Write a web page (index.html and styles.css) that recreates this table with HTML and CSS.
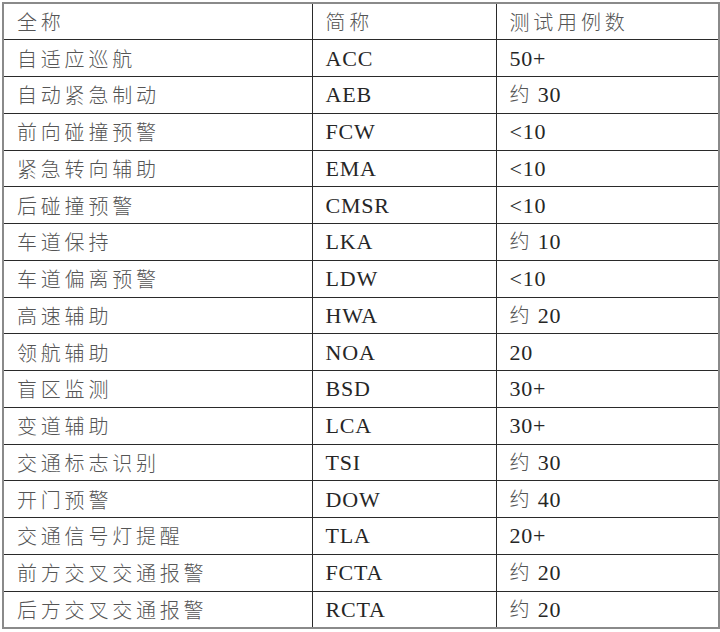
FILE: index.html
```html
<!DOCTYPE html>
<html lang="zh">
<head>
<meta charset="utf-8">
<link rel="stylesheet" href="styles.css">
</head>
<body>
<table class="grid">
<colgroup><col class="c1"><col class="c2"><col class="c3"></colgroup>
<tr><td class="zh">全称</td><td class="zh">简称</td><td class="zh">测试用例数</td></tr>
<tr><td class="zh">自适应巡航</td><td>ACC</td><td>50+</td></tr>
<tr><td class="zh">自动紧急制动</td><td>AEB</td><td><span class="zh">约</span> 30</td></tr>
<tr><td class="zh">前向碰撞预警</td><td>FCW</td><td>&lt;10</td></tr>
<tr><td class="zh">紧急转向辅助</td><td>EMA</td><td>&lt;10</td></tr>
<tr><td class="zh">后碰撞预警</td><td>CMSR</td><td>&lt;10</td></tr>
<tr><td class="zh">车道保持</td><td>LKA</td><td><span class="zh">约</span> 10</td></tr>
<tr><td class="zh">车道偏离预警</td><td>LDW</td><td>&lt;10</td></tr>
<tr><td class="zh">高速辅助</td><td>HWA</td><td><span class="zh">约</span> 20</td></tr>
<tr><td class="zh">领航辅助</td><td>NOA</td><td>20</td></tr>
<tr><td class="zh">盲区监测</td><td>BSD</td><td>30+</td></tr>
<tr><td class="zh">变道辅助</td><td>LCA</td><td>30+</td></tr>
<tr><td class="zh">交通标志识别</td><td>TSI</td><td><span class="zh">约</span> 30</td></tr>
<tr><td class="zh">开门预警</td><td>DOW</td><td><span class="zh">约</span> 40</td></tr>
<tr><td class="zh">交通信号灯提醒</td><td>TLA</td><td>20+</td></tr>
<tr><td class="zh">前方交叉交通报警</td><td>FCTA</td><td><span class="zh">约</span> 20</td></tr>
<tr><td class="zh">后方交叉交通报警</td><td>RCTA</td><td><span class="zh">约</span> 20</td></tr>
</table>
</body>
</html>
```
FILE: styles.css
```css
html, body {
  margin: 0;
  padding: 0;
  background: #ffffff;
}
body {
  padding: 2px 0 0 2px;
}
.grid {
  border-collapse: collapse;
  table-layout: fixed;
  width: 716px;
  border: 2px solid #8a8a8a;
  font-family: "Liberation Serif", "Noto Sans CJK SC", serif;
  font-size: 22px;
  letter-spacing: 0.8px;
  color: #262626;
}
.c1 { width: 309px; }
.c2 { width: 184px; }
.c3 { width: 223px; }
.grid tr {
  height: 36.76px;
}
.grid td {
  border: 1px solid #2a2a2a;
  padding: 1px 0 0 13px;
  vertical-align: middle;
  line-height: 1;
  white-space: nowrap;
}
.zh {
  font-family: "Noto Sans CJK SC", sans-serif;
  font-weight: 300;
  font-size: 20px;
  letter-spacing: 3.8px;
  color: #555555;
}
td .zh {
  letter-spacing: 0;
  margin-right: 2px;
}
```
